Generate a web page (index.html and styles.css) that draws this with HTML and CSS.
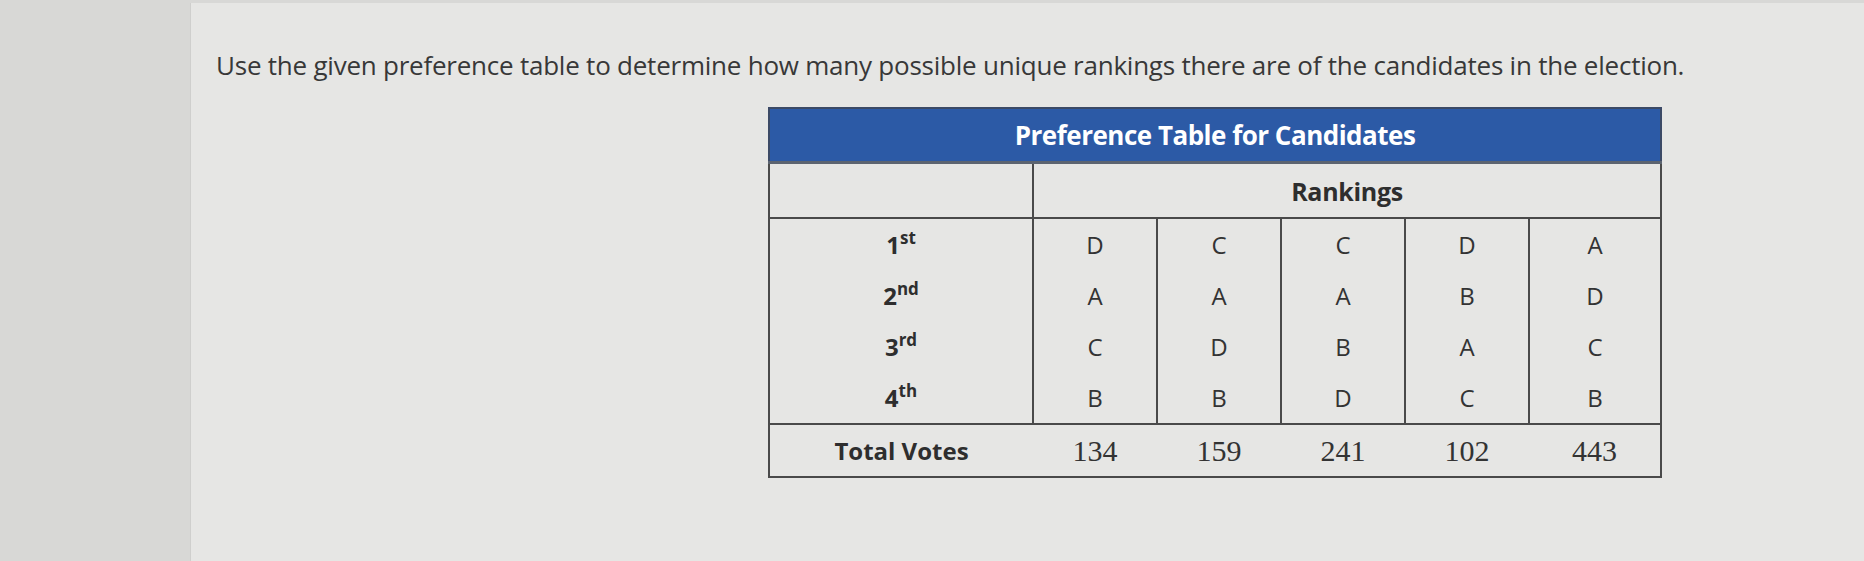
FILE: index.html
```html
<!DOCTYPE html>
<html>
<head>
<meta charset="utf-8">
<link rel="stylesheet" href="styles.css">
</head>
<body>
<div class="panel">
  <p class="question">Use the given preference table to determine how many possible unique rankings there are of the candidates in the election.</p>
  <table class="pref">
    <colgroup>
      <col class="c-label"><col class="c-val"><col class="c-val"><col class="c-val"><col class="c-val"><col class="c-last">
    </colgroup>
    <tr class="title-row"><th colspan="6">Preference Table for Candidates</th></tr>
    <tr class="rank-row"><td class="blank"></td><th colspan="5">Rankings</th></tr>
    <tr class="data first"><th>1<sup>st</sup></th><td>D</td><td>C</td><td>C</td><td>D</td><td>A</td></tr>
    <tr class="data"><th>2<sup>nd</sup></th><td>A</td><td>A</td><td>A</td><td>B</td><td>D</td></tr>
    <tr class="data"><th>3<sup>rd</sup></th><td>C</td><td>D</td><td>B</td><td>A</td><td>C</td></tr>
    <tr class="data last"><th>4<sup>th</sup></th><td>B</td><td>B</td><td>D</td><td>C</td><td>B</td></tr>
    <tr class="total-row"><th>Total Votes</th><td>134</td><td>159</td><td>241</td><td>102</td><td>443</td></tr>
  </table>
</div>
</body>
</html>
```

FILE: styles.css
```css
html, body {
  margin: 0;
  padding: 0;
}
body {
  background: #d8d8d6;
  width: 1864px;
  height: 561px;
  overflow: hidden;
  font-family: "Open Sans", "Noto Sans", sans-serif;
}
.panel {
  margin: 3px 0 0 190px;
  height: 558px;
  background: #e6e6e4;
  padding: 0 0 0 25px;
  box-sizing: border-box;
  border-left: 1px solid #cfcfcd;
}
.question {
  margin: 0;
  padding-top: 46px;
  font-size: 26px;
  line-height: 32px;
  color: #383838;
  letter-spacing: -0.23px;
}
.pref {
  margin: 26px 0 0 552px;
  border-collapse: collapse;
  width: 892px;
  table-layout: fixed;
  color: #2e2e2e;
}
.c-label { width: 264px; }
.c-val { width: 124px; }
.c-last { width: 132px; }
.pref th, .pref td {
  padding: 0;
  text-align: center;
}
.title-row th {
  background: #2c5aa6;
  color: #ffffff;
  height: 52px;
  font-size: 26px;
  font-weight: 700;
  letter-spacing: -0.5px;
  border: 2px solid #3c4a66;
  border-bottom: 3px solid #5c6470;
}
.rank-row th, .rank-row td {
  height: 53px;
  border: 2px solid #4a4a4a;
  font-size: 25px;
  font-weight: 700;
  letter-spacing: -0.3px;
}
.data th, .data td {
  height: 51px;
  border-left: 2px solid #4a4a4a;
  border-right: 2px solid #4a4a4a;
  font-size: 24px;
}
.data th {
  font-size: 24px;
  font-weight: 700;
}
.data.last th, .data.last td {
  border-bottom: 2px solid #4a4a4a;
}
.data sup {
  font-size: 17px;
  vertical-align: 10px;
  line-height: 0;
}
.data td {
  font-weight: 400;
  color: #333;
}
.total-row th, .total-row td {
  height: 51px;
  border-top: 2px solid #4a4a4a;
  border-bottom: 2px solid #4a4a4a;
}
.total-row th {
  border-left: 2px solid #4a4a4a;
  font-size: 24px;
  font-weight: 700;
}
.total-row td:last-child {
  border-right: 2px solid #4a4a4a;
}
.total-row td {
  font-family: "Liberation Serif", "Times New Roman", serif;
  font-size: 30px;
  color: #333;
}
```
